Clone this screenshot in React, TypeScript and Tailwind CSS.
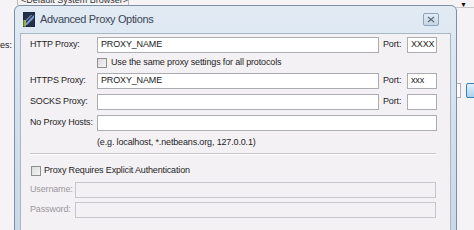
import React from 'react';

const FONT = "font-['Liberation_Sans',Arial,sans-serif]";

function Field({ value, className = '' }: { value?: string; className?: string }) {
  return (
    <div
      className={`flex h-[16px] items-center border border-[#abadb3] bg-white pl-[3px] text-[9px] tracking-[-0.15px] text-[#1a1a1a] ${className}`}
    >
      {value}
    </div>
  );
}

function Check() {
  return (
    <span className="block h-[10px] w-[10px] shrink-0 border border-[#8e8f8f] bg-gradient-to-br from-[#dcdcdc] to-[#f4f4f4]" />
  );
}

function ProxyRow({ label, value, port }: { label: string; value?: string; port?: string }) {
  return (
    <div className="flex h-[16px] items-center">
      <span className="w-[67px] shrink-0">{label}</span>
      <Field value={value} className="w-[282px]" />
      <span className="ml-[4px] w-[22px] shrink-0">Port:</span>
      <Field value={port} className="ml-[2px] w-[30px] text-[8px] tracking-[-0.4px]" />
    </div>
  );
}

function AuthRow({ label }: { label: string }) {
  return (
    <div className="flex h-[16px] items-center">
      <span className="w-[45px] shrink-0 text-[#9a979b]">{label}</span>
      <div className="h-[16px] w-[361px] border border-[#c9c6cb] bg-[#f4f1f4]" />
    </div>
  );
}

export default function App() {
  return (
    <div className={`relative h-[230px] w-[474px] overflow-hidden bg-[#f6f3f6] ${FONT}`}>
      {/* window behind the dialog */}
      <div className="absolute left-[17px] top-[-7px] flex h-[12px] w-[112px] items-end whitespace-nowrap border-x border-[#b9b9b9] pl-[3px] text-[9px] leading-[10px] text-[#333]">
        &lt;Default System Browser&gt;
      </div>
      <div className="absolute left-[455px] top-[7px] h-px w-[19px] bg-[#c9c9c9]" />
      <div className="absolute left-[460px] top-[1px] text-[7px] leading-none text-[#111]">▼</div>
      <div className="absolute left-0 top-[39px] text-[9px] text-[#222]">es:</div>
      <div className="absolute left-[455px] top-[83px] h-[15px] w-[6px] border border-[#b3b3b3] bg-white" />
      <div className="absolute left-[466px] top-[83px] h-[15px] w-[14px] rounded-[2px] border border-[#3c7fb1] bg-gradient-to-b from-[#e3f1fb] to-[#a9d2f2]" />

      {/* dialog */}
      <div className="absolute left-[14px] top-[5px] flex h-[240px] w-[443px] flex-col rounded-t-[6px] border border-[#7d8fa3] bg-gradient-to-b from-[#e2ebf4] via-[#d3e0ec] to-[#c9d8e7] px-[5px]">
        <div className="flex h-[27px] shrink-0 items-center">
          <svg viewBox="0 0 12 15" className="ml-[3px] h-[15px] w-[12px]">
            <rect x="0" y="0" width="12" height="15" fill="#25304a" />
            <path d="M1 13 L11 3 L11 6 L4 13 Z" fill="#7d9bd0" />
            <path d="M1 10 L8 3 L9 3 L1 11 Z" fill="#a9bde0" />
            <rect x="0" y="8" width="3" height="7" fill="#8fb24a" />
            <rect x="0" y="0" width="12" height="15" fill="none" stroke="#1b2233" strokeWidth="0.8" />
          </svg>
          <span className="ml-[5px] text-[11px] tracking-[-0.35px] text-[#3b4654]">Advanced Proxy Options</span>
          <div className="ml-auto mr-[12px] flex h-[13px] w-[16px] items-center justify-center rounded-[2px] border border-[#8fa3ba] bg-gradient-to-b from-[#e4ecf4] to-[#c6d5e4]">
            <svg viewBox="0 0 8 7" className="h-[7px] w-[8px]">
              <path d="M1 1 L7 6 M7 1 L1 6" stroke="#5d6d80" strokeWidth="1.3" fill="none" />
            </svg>
          </div>
        </div>

        <div className="flex-1 border border-b-0 border-[#a7b7c8] bg-[#f4f1f4] pl-[9px] pt-[3px] text-[9px] tracking-[-0.15px] text-[#1e1e1e]">
          <ProxyRow label="HTTP Proxy:" value="PROXY_NAME" port="XXXX" />
          <div className="ml-[67px] mt-[5px] flex h-[10px] items-center gap-[4px]">
            <Check />
            <span>Use the same proxy settings for all protocols</span>
          </div>
          <div className="mt-[5px] flex flex-col gap-[5px]">
            <ProxyRow label="HTTPS Proxy:" value="PROXY_NAME" port="xxx" />
            <ProxyRow label="SOCKS Proxy:" />
            <div className="flex h-[16px] items-center">
              <span className="w-[67px] shrink-0">No Proxy Hosts:</span>
              <Field className="w-[340px]" />
            </div>
          </div>
          <div className="ml-[67px] mt-[5px] h-[12px] leading-[12px]">
            (e.g. localhost, *.netbeans.org, 127.0.0.1)
          </div>
          <div className="mr-[14px] mt-[5px] h-[2px] border-t border-b border-t-[#c9c5ca] border-b-white" />
          <div className="ml-[1px] mt-[11px] flex h-[10px] items-center gap-[3px]">
            <Check />
            <span>Proxy Requires Explicit Authentication</span>
          </div>
          <div className="mt-[6px] flex flex-col gap-[4px]">
            <AuthRow label="Username:" />
            <AuthRow label="Password:" />
          </div>
        </div>
      </div>
    </div>
  );
}
